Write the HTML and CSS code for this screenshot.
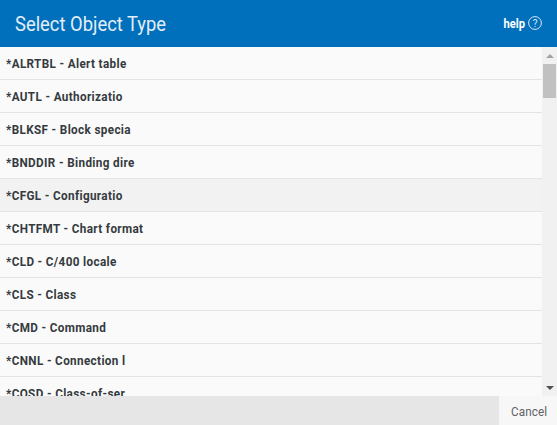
FILE: index.html
```html
<!DOCTYPE html>
<html lang="en">
<head>
    <meta charset="UTF-8">
    <title>Select Object Type</title>
    <link rel="stylesheet" href="styles.css">
</head>
<body>
    <div class="dialog">
        <div class="header">
            <h1 class="title">Select Object Type</h1>
            <div class="help">
                <span class="narrow help-text">help</span>
                <svg class="help-icon" width="14" height="14" viewBox="0 0 14 14">
                    <circle cx="7" cy="7" r="6.4" fill="none" stroke="#dbe9f5" stroke-width="1"/>
                    <text x="7" y="10.5" text-anchor="middle" class="help-mark">?</text>
                </svg>
            </div>
        </div>
        <div class="body">
            <div class="list">
                <div class="row"><span class="narrow">*ALRTBL - Alert table</span></div>
                <div class="row"><span class="narrow">*AUTL - Authorizatio</span></div>
                <div class="row"><span class="narrow">*BLKSF - Block specia</span></div>
                <div class="row"><span class="narrow">*BNDDIR - Binding dire</span></div>
                <div class="row row-hover"><span class="narrow">*CFGL - Configuratio</span></div>
                <div class="row"><span class="narrow">*CHTFMT - Chart format</span></div>
                <div class="row"><span class="narrow">*CLD - C/400 locale</span></div>
                <div class="row"><span class="narrow">*CLS - Class</span></div>
                <div class="row"><span class="narrow">*CMD - Command</span></div>
                <div class="row"><span class="narrow">*CNNL - Connection l</span></div>
                <div class="row"><span class="narrow">*COSD - Class-of-ser</span></div>
            </div>
            <div class="scrollbar">
                <div class="arrow arrow-up"></div>
                <div class="thumb"></div>
                <div class="arrow arrow-down"></div>
            </div>
        </div>
        <div class="footer">
            <button class="cancel"><span class="narrow cancel-text">Cancel</span></button>
        </div>
    </div>
</body>
</html>
```

FILE: styles.css
```css
html, body {
    margin: 0;
    height: 100%;
}
body {
    font-family: Roboto, "Liberation Sans", sans-serif;
    background-color: #fafafa;
    color: #333;
    overflow: hidden;
}
.dialog {
    display: flex;
    flex-direction: column;
    height: 425px;
}
.header {
    display: flex;
    justify-content: space-between;
    align-items: center;
    height: 47px;
    padding: 0 15px 0 15px;
    background-color: #0070bd;
    color: #e3eef7;
    flex: none;
}
.title {
    margin: 0;
    font-size: 21px;
    font-weight: 400;
    transform: scaleX(0.875);
    transform-origin: left center;
}
/* no condensed Roboto installed, so squeeze the regular one */
.narrow {
    display: inline-block;
    transform: scaleX(0.9);
    transform-origin: left center;
    letter-spacing: 0.4px;
}
.help {
    display: flex;
    align-items: center;
    gap: 3px;
    margin-top: -1px;
    font-size: 13px;
    font-weight: 700;
    color: #fff;
}
.help-text {
    letter-spacing: 0;
    transform: scaleX(0.86);
    transform-origin: right center;
}
.help-icon {
    display: block;
}
.help-mark {
    font-size: 10px;
    font-weight: 400;
    fill: #dbe9f5;
}
.body {
    display: flex;
    height: 349px;
    flex: none;
}
.list {
    flex: 1;
    overflow: hidden;
}
.row {
    height: 32px;
    line-height: 33px;
    padding-left: 6px;
    border-bottom: 1px solid #e4e4e4;
    font-size: 13px;
    font-weight: 700;
    color: #353a40;
    white-space: nowrap;
}
.row-hover {
    background-color: #f2f2f2;
}
.scrollbar {
    display: flex;
    flex-direction: column;
    align-items: center;
    width: 15px;
    background-color: #f1f1f1;
    flex: none;
}
.arrow {
    width: 0;
    height: 0;
    border-left: 4px solid transparent;
    border-right: 4px solid transparent;
}
.arrow-up {
    margin-top: 7px;
    border-bottom: 4px solid #a3a3a3;
}
.arrow-down {
    margin-top: auto;
    margin-bottom: 6px;
    border-top: 4px solid #505050;
}
.thumb {
    width: 13px;
    height: 34px;
    margin-top: 6px;
    background-color: #c1c1c1;
}
.footer {
    display: flex;
    justify-content: flex-end;
    flex: 1;
    background-color: #e6e6e6;
}
.cancel {
    width: 58px;
    border: none;
    background-color: #f7f7f7;
    font-family: inherit;
    font-size: 13px;
    color: #5f6368;
    padding: 2px 0 0 12px;
    text-align: left;
}
.cancel-text {
    letter-spacing: 0.1px;
}
```
